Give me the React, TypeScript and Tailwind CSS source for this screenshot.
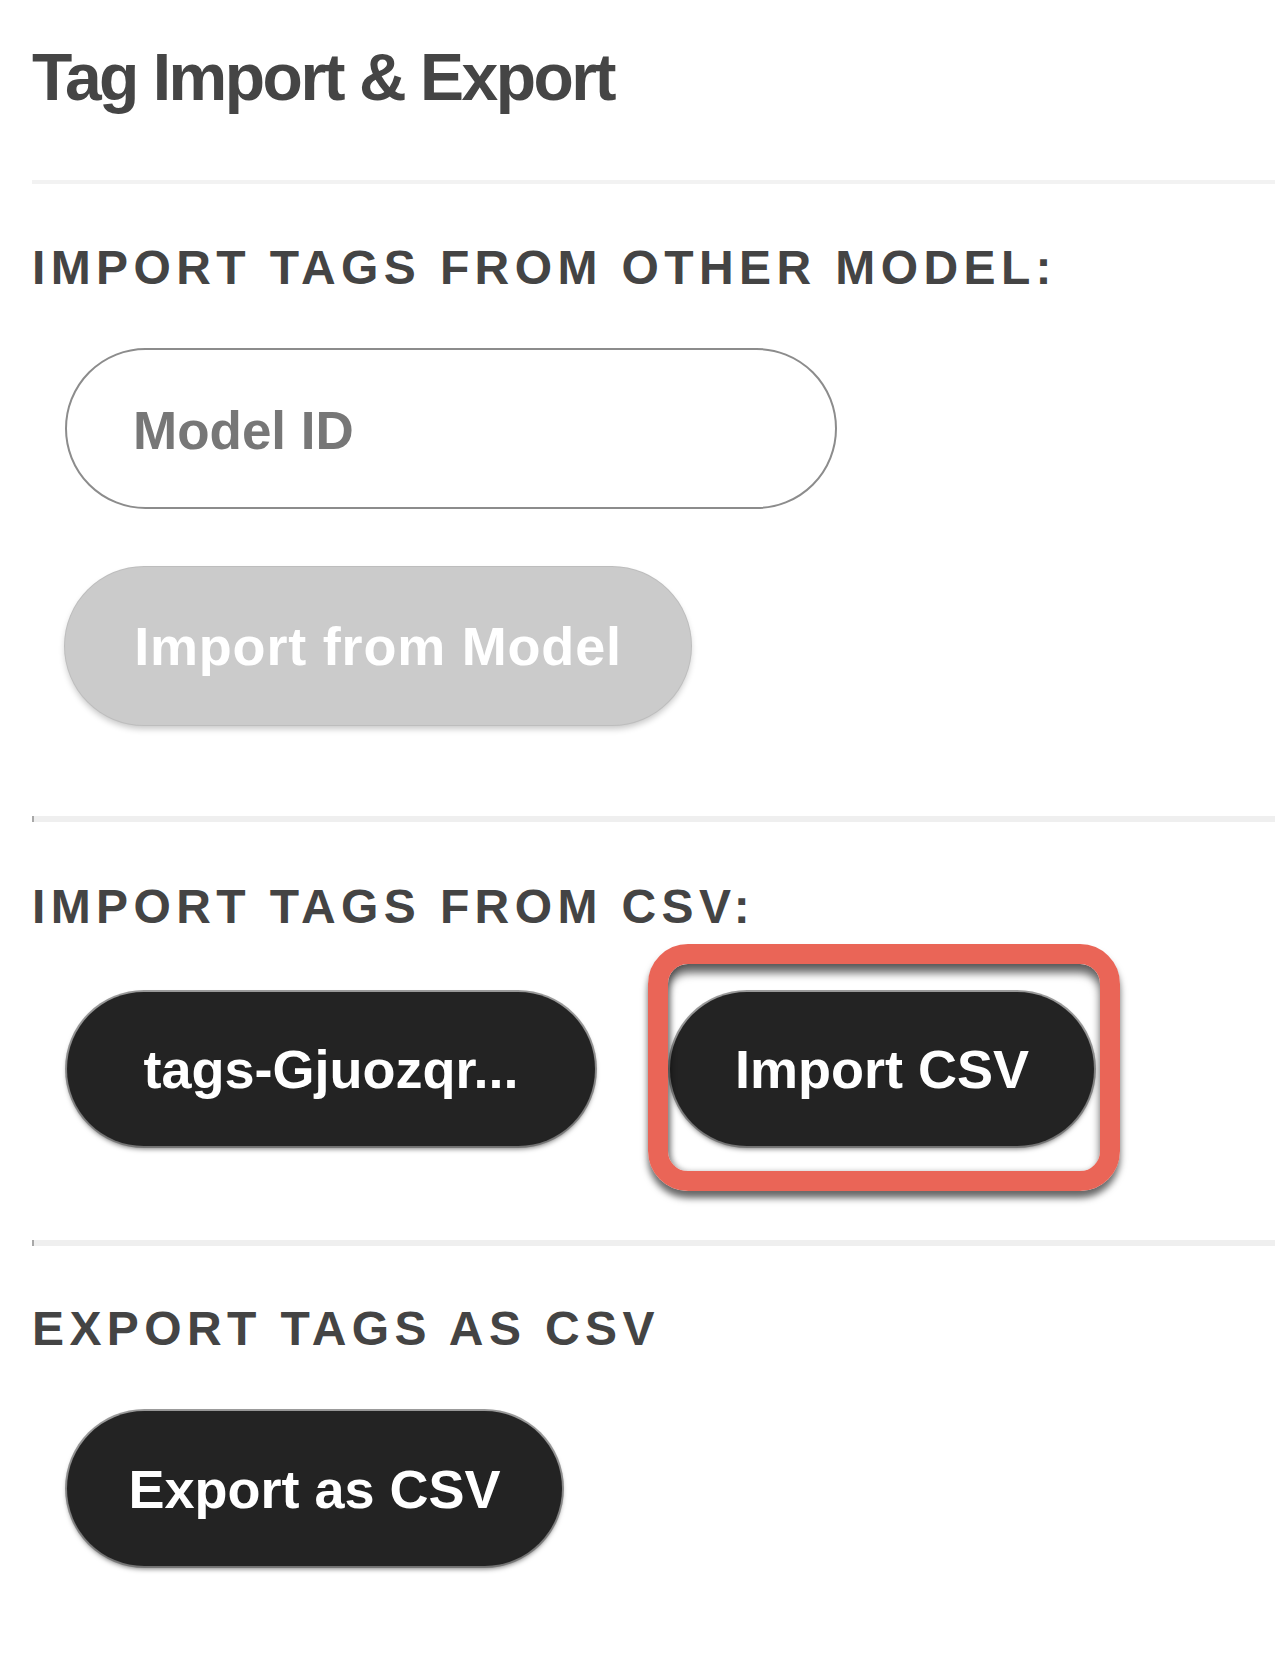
export default function App() {
  const btn =
    "h-[154px] rounded-full bg-[#232323] text-white text-[54px] font-bold leading-none flex items-center justify-center shadow-[0_3px_5px_rgba(0,0,0,0.5)] ring-2 ring-[#5a5a5a]/60"

  return (
    <div className="min-h-screen bg-white font-['Liberation_Sans',Arial,sans-serif] text-[#444444]">
      <div className="flex flex-col pl-[32px] pr-[5px]">
        {/* header */}
        <h1 className="pt-[44px] h-[110px] text-[66px] font-bold leading-none tracking-[-2.5px] text-[#454545]">
          Tag Import &amp; Export
        </h1>
        <div className="mt-[70px] h-[4px] bg-[#f2f2f2]"></div>

        {/* from other model */}
        <h2 className="mt-[60px] h-[48px] text-[48px] font-bold leading-none tracking-[5.4px]">
          IMPORT TAGS FROM OTHER MODEL:
        </h2>
        <div className="mt-[56px] ml-[33px] w-[772px] h-[161px] rounded-full border-2 border-[#8c8c8c] flex items-center pl-[66px] pt-[5px]">
          <input
            placeholder="Model ID"
            className="w-full bg-transparent outline-none text-[53px] font-bold text-[#333] placeholder:text-[#777777]"
          />
        </div>
        <button className="mt-[58px] ml-[33px] w-[626px] h-[158px] rounded-full bg-[#cbcbcb] text-white text-[54px] font-bold leading-none flex items-center justify-center tracking-[0.8px] shadow-[0_4px_6px_rgba(0,0,0,0.22)] ring-1 ring-[#bdbdbd]">
          Import from Model
        </button>

        <div className="mt-[91px] h-[6px] bg-[#efefef] border-l-2 border-[#a8a8a8]"></div>

        {/* from csv */}
        <h2 className="mt-[61px] h-[48px] text-[48px] font-bold leading-none tracking-[5.4px]">
          IMPORT TAGS FROM CSV:
        </h2>
        <div className="mt-[61px] ml-[35px] flex gap-[75px]">
          <button className={btn + " w-[528px]"}>tags-Gjuozqr...</button>
          <div className="relative">
            <button className={btn + " w-[424px]"}>Import CSV</button>
            {/* highlight annotation */}
            <div className="absolute -left-[22px] -top-[48px] w-[472px] h-[247px] rounded-[40px] border-[20px] border-[#ea6557] shadow-[0_7px_7px_rgba(0,0,0,0.6),inset_0_9px_9px_rgba(0,0,0,0.6),inset_3px_0_5px_rgba(0,0,0,0.25)] pointer-events-none"></div>
          </div>
        </div>

        <div className="mt-[94px] h-[6px] bg-[#efefef] border-l-2 border-[#a8a8a8]"></div>

        {/* export */}
        <h2 className="mt-[59px] h-[48px] text-[48px] font-bold leading-none tracking-[5.4px]">
          EXPORT TAGS AS CSV
        </h2>
        <div className="mt-[58px] ml-[35px] pb-[115px]">
          <button className={btn + " w-[495px] h-[155px]"}>Export as CSV</button>
        </div>
      </div>
    </div>
  )
}
